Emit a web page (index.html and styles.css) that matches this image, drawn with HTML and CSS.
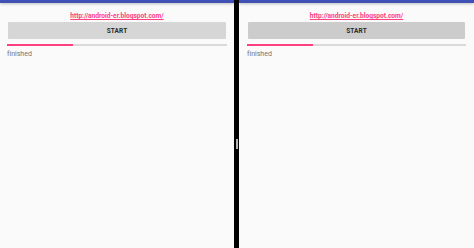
FILE: index.html
```html
<!DOCTYPE html>
<html lang="en">
<head>
  <meta charset="UTF-8" />
  <title>Split Screen Progress</title>
  <meta name="viewport" content="width=device-width, initial-scale=1.0" />
  <link rel="stylesheet" href="styles.css">
</head>
<body>
  <div class="screen">
    <div class="pane pane-left">
      <div class="appbar"></div>
      <div class="content">
        <a class="link" href="#">http://android-er.blogspot.com/</a>
        <button class="btn">START</button>
        <div class="progress"><div class="progress-fill" style="width: 30%;"></div></div>
        <div class="status">finished</div>
      </div>
    </div>

    <div class="divider"><span class="handle"></span></div>

    <div class="pane pane-right">
      <div class="appbar"></div>
      <div class="content">
        <a class="link" href="#">http://android-er.blogspot.com/</a>
        <button class="btn btn-dark">START</button>
        <div class="progress"><div class="progress-fill" style="width: 30%;"></div></div>
        <div class="status">finished</div>
      </div>
    </div>
  </div>
</body>
</html>
```

FILE: styles.css
```css
body {
  margin: 0;
  padding: 0;
  background: #fafafa;
  font-family: Roboto, 'Liberation Sans', sans-serif;
  font-variant-ligatures: none;
}

.screen {
  display: flex;
  height: 248px;
  width: 474px;
  overflow: hidden;
}

.pane {
  display: flex;
  flex-direction: column;
  background: #fafafa;
}

.pane-left {
  width: 234px;
}

.pane-right {
  width: 235px;
}

.appbar {
  height: 3px;
  background: #3f51b5;
  box-shadow: 0 1px 3px rgba(0,0,0,0.25);
}

.content {
  display: flex;
  flex-direction: column;
  padding: 0 7px;
}

.pane-right .content {
  padding: 0 8px;
}

.link {
  align-self: center;
  margin-top: 9px;
  font-size: 6.6px;
  font-weight: bold;
  line-height: 8px;
  color: #ff4081;
  text-decoration: underline;
}

.btn {
  margin: 2px 1px 0;
  height: 17px;
  padding: 0;
  border: none;
  border-radius: 1px;
  background: #d6d6d6;
  color: #2b2b2b;
  font-family: Roboto, 'Liberation Sans', sans-serif;
  font-size: 6.5px;
  font-weight: bold;
  letter-spacing: 0.1px;
}

.btn-dark {
  background: #cccccc;
}

.progress {
  margin-top: 5px;
  height: 2px;
  background: #d9d9d9;
}

.progress-fill {
  height: 100%;
  background: #ff4081;
}

.status {
  margin-top: 4px;
  font-size: 7px;
  line-height: 9px;
  color: #757575;
}

.divider {
  width: 5px;
  background: #000;
  display: flex;
  align-items: center;
  justify-content: center;
}

.handle {
  width: 2px;
  height: 10px;
  background: #b5b5b5;
  margin-top: 40px;
}
```
